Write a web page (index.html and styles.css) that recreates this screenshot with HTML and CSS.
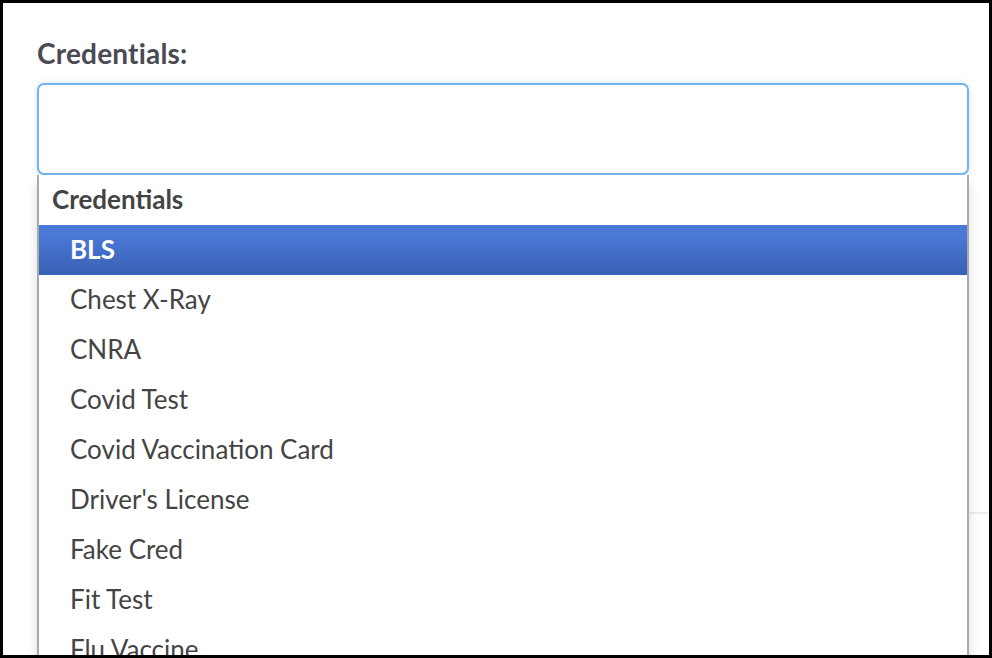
FILE: index.html
```html
<!DOCTYPE html>
<html lang="en">
<head>
  <meta charset="UTF-8">
  <title>Credentials</title>
  <link rel="stylesheet" href="styles.css">
</head>
<body>
  <div class="frame">
    <div class="field">
      <label class="field-label">Credentials:</label>
      <div class="select">
        <div class="choices"></div>
        <div class="drop">
          <ul class="results">
            <li class="group">Credentials</li>
            <li class="option active">BLS</li>
            <li class="option">Chest X-Ray</li>
            <li class="option">CNRA</li>
            <li class="option">Covid Test</li>
            <li class="option">Covid Vaccination Card</li>
            <li class="option">Driver's License</li>
            <li class="option">Fake Cred</li>
            <li class="option">Fit Test</li>
            <li class="option">Flu Vaccine</li>
            <li class="option">Hepatitis B</li>
          </ul>
        </div>
      </div>
    </div>
    <div class="section-rule"></div>
  </div>
</body>
</html>
```

FILE: styles.css
```css
html, body {
  margin: 0;
  padding: 0;
  background: #000;
}
.frame {
  box-sizing: border-box;
  width: 992px;
  height: 658px;
  border: 3px solid #000;
  background: #fff;
  overflow: hidden;
  padding: 34px 20px 0 34px;
  font-family: Lato, "Open Sans", sans-serif;
}
.field-label {
  display: block;
  font-size: 28px;
  font-weight: bold;
  color: #4a4a55;
  line-height: 32px;
  margin-bottom: 14px;
  letter-spacing: 0.2px;
}
.select {
  position: relative;
}
.choices {
  height: 92px;
  box-sizing: border-box;
  border: 2px solid #74b3ea;
  border-radius: 7px;
  box-shadow: 0 0 6px rgba(116, 179, 234, 0.35);
  background: #fff;
}
.drop {
  position: absolute;
  top: 92px;
  left: 0;
  right: 0;
  z-index: 2;
  background: #fff;
  border: 2px solid #aaa;
  border-top: 0;
  box-shadow: 0 8px 10px rgba(0, 0, 0, 0.15);
}
.results {
  list-style: none;
  margin: 0;
  padding: 0;
}
.results li {
  height: 50px;
  box-sizing: border-box;
  line-height: 48px;
  padding-bottom: 2px;
  font-size: 26px;
  color: #444;
}
.group {
  font-weight: bold;
  padding-left: 13px;
}
.option {
  padding-left: 31px;
}
.option.active {
  background: linear-gradient(#4b79d6 20%, #3a62b6 95%);
  color: #fff;
  font-weight: bold;
}
.section-rule {
  margin: 337px -20px 0 0;
  border-top: 2px solid #ececec;
}
```
